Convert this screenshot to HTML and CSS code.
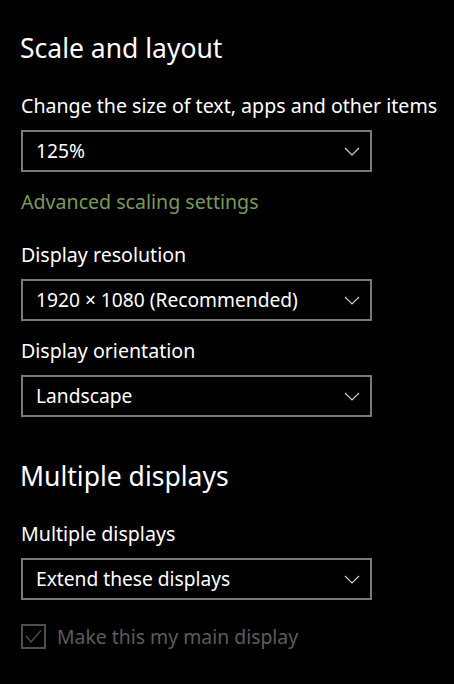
FILE: index.html
```html
<!DOCTYPE html>
<html lang="en">
<head>
    <meta charset="UTF-8">
    <meta name="viewport" content="width=device-width, initial-scale=1.0">
    <title>Display settings</title>
    <link rel="stylesheet" href="styles.css">
</head>
<body>
    <div class="settings">
        <h2 class="section-title">Scale and layout</h2>

        <div class="label label-first">Change the size of text, apps and other items</div>
        <div class="dropdown">
            <span class="dropdown-value">125%</span>
            <svg class="chevron" width="16" height="9" viewBox="0 0 16 9"><polyline points="1,1 8,8 15,1" fill="none" stroke="#d0d0d0" stroke-width="1.2"/></svg>
        </div>
        <a class="link" href="#">Advanced scaling settings</a>

        <div class="label label-gap">Display resolution</div>
        <div class="dropdown">
            <span class="dropdown-value">1920 × 1080 (Recommended)</span>
            <svg class="chevron" width="16" height="9" viewBox="0 0 16 9"><polyline points="1,1 8,8 15,1" fill="none" stroke="#d0d0d0" stroke-width="1.2"/></svg>
        </div>

        <div class="label label-near">Display orientation</div>
        <div class="dropdown">
            <span class="dropdown-value">Landscape</span>
            <svg class="chevron" width="16" height="9" viewBox="0 0 16 9"><polyline points="1,1 8,8 15,1" fill="none" stroke="#d0d0d0" stroke-width="1.2"/></svg>
        </div>

        <h2 class="section-title section-second">Multiple displays</h2>

        <div class="label label-first">Multiple displays</div>
        <div class="dropdown">
            <span class="dropdown-value">Extend these displays</span>
            <svg class="chevron" width="16" height="9" viewBox="0 0 16 9"><polyline points="1,1 8,8 15,1" fill="none" stroke="#d0d0d0" stroke-width="1.2"/></svg>
        </div>

        <label class="checkbox disabled">
            <svg class="checkbox-box" width="25" height="25" viewBox="0 0 25 25">
                <rect x="1" y="1" width="23" height="23" fill="none" stroke="#4e4e4e" stroke-width="2"/>
                <polyline points="5,12 10,18 20,6.5" fill="none" stroke="#4e4e4e" stroke-width="1.4"/>
            </svg>
            <span class="checkbox-text">Make this my main display</span>
        </label>
    </div>
</body>
</html>
```

FILE: styles.css
```css
body {
    margin: 0;
    background-color: #000000;
    color: #ffffff;
    font-family: "Noto Sans", "Open Sans", sans-serif;
}

.settings {
    display: flex;
    flex-direction: column;
    align-items: flex-start;
    padding: 30px 0 0 20px;
}

.section-title {
    margin: 0;
    font-size: 26.5px;
    font-weight: normal;
    line-height: 36px;
}

.section-second {
    margin-top: 41px;
}

.label {
    font-size: 19.6px;
    line-height: 28px;
    padding-left: 1px;
}

.label-first {
    margin-top: 26px;
}

.label-gap {
    margin-top: 25px;
}

.label-near {
    margin-top: 16px;
}

.dropdown {
    box-sizing: border-box;
    width: 351px;
    height: 42px;
    margin-top: 10px;
    margin-left: 1px;
    border: 2px solid #7a7a7a;
    display: flex;
    align-items: center;
    justify-content: space-between;
    padding: 0 10px 0 13px;
}

.dropdown-value {
    font-size: 19.2px;
    line-height: 38px;
}

.chevron {
    display: block;
}

.link {
    margin-top: 16px;
    padding-left: 1px;
    font-size: 19.6px;
    line-height: 28px;
    color: #789a59;
    text-decoration: none;
}

.checkbox {
    display: flex;
    align-items: center;
    gap: 11px;
    margin-top: 24px;
    margin-left: 1px;
}

.checkbox-box {
    display: block;
}

.checkbox-text {
    font-size: 19.4px;
    line-height: 24px;
}

.disabled .checkbox-text {
    color: #5c5c5c;
}
```
